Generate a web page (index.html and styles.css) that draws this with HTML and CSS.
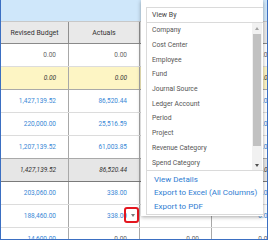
FILE: index.html
```html
<!DOCTYPE html>
<html>
<head>
<meta charset="utf-8">
<link rel="stylesheet" href="styles.css">
</head>
<body>
<div class="frame">
  <div class="band"></div>
  <div class="row head">
    <div class="c">Revised Budget</div>
    <div class="c">Actuals</div>
    <div class="c"></div>
    <div class="c"></div>
  </div>
  <div class="row">
    <div class="c n">0.00</div><div class="c n">0.00</div><div class="c n"></div><div class="c n">0.00</div>
  </div>
  <div class="row yellow">
    <div class="c n">0.00</div><div class="c n">0.00</div><div class="c n"></div><div class="c n">0.00</div>
  </div>
  <div class="row">
    <div class="c n link">1,427,139.52</div><div class="c n link">86,520.44</div><div class="c n"></div><div class="c n link">0.00</div>
  </div>
  <div class="row">
    <div class="c n link">220,000.00</div><div class="c n link">25,516.59</div><div class="c n"></div><div class="c n link">0.00</div>
  </div>
  <div class="row">
    <div class="c n link">1,207,139.52</div><div class="c n link">61,003.85</div><div class="c n"></div><div class="c n link">0.00</div>
  </div>
  <div class="row grey">
    <div class="c n">1,427,139.52</div><div class="c n">86,520.44</div><div class="c n"></div><div class="c n">0.00</div>
  </div>
  <div class="row">
    <div class="c n link">203,060.00</div><div class="c n link">338.00</div><div class="c n"></div><div class="c n link">0.00</div>
  </div>
  <div class="row">
    <div class="c n link">188,460.00</div><div class="c n link active">338.00<span class="hl"><span class="tri"></span></span></div><div class="c n"></div><div class="c n link">0.00</div>
  </div>
  <div class="row">
    <div class="c n link">14,600.00</div><div class="c n">0.00</div><div class="c n">0.00</div><div class="c n">0.00</div>
  </div>

  <div class="popup">
    <div class="box">
      <div class="viewby">View By</div>
      <div class="list">
        <ul class="items">
          <li>Company</li>
          <li>Cost Center</li>
          <li>Employee</li>
          <li>Fund</li>
          <li>Journal Source</li>
          <li>Ledger Account</li>
          <li>Period</li>
          <li>Project</li>
          <li>Revenue Category</li>
          <li>Spend Category</li>
        </ul>
        <div class="sb">
          <div class="sb-btn"><span class="up"></span></div>
          <div class="sb-track"><div class="sb-thumb"></div></div>
          <div class="sb-btn"><span class="down"></span></div>
        </div>
      </div>
      <div class="links">
        <a>View Details</a>
        <a>Export to Excel (All Columns)</a>
        <a>Export to PDF</a>
      </div>
    </div>
  </div>
</div>
</body>
</html>
```

FILE: styles.css
```css
html, body {
  margin: 0;
  padding: 0;
  background: #ffffff;
}
.frame {
  position: relative;
  width: 266px;
  height: 239px;
  border-left: 1px solid #3b6fc2;
  border-right: 1px solid #3b6fc2;
  border-bottom: 1px solid #3b6fc2;
  overflow: hidden;
  font-family: Roboto, "Liberation Sans", sans-serif;
}
.band {
  height: 21px;
  background: #cfe7fa;
}
.row {
  display: grid;
  grid-template-columns: 68px 71px 72px 72px;
  height: 22px;
  border-bottom: 1px solid #dcdcdc;
  background: #ffffff;
}
.c {
  display: flex;
  align-items: center;
  border-right: 1px solid #a8a8a8;
  font-size: 6.5px;
  color: #666;
  white-space: nowrap;
  position: relative;
}
.n {
  justify-content: flex-end;
  padding-right: 12px;
}
.head {
  height: 21px;
  border-top: 1px solid #c8c8c8;
  border-bottom: 1px solid #8a8a8a;
  background: #e9e9e9;
}
.head .c {
  justify-content: center;
  font-size: 7px;
  color: #333;
  border-right-color: #8f8f8f;
}
.yellow {
  background: #fdf5c4;
  border-bottom-color: #a9a9a9;
}
.yellow .c, .grey .c {
  font-style: italic;
  color: #333;
}
.grey {
  background: #e6e6e6;
  border-bottom-color: #7a7a7a;
}
.row:has(+ .grey) {
  border-bottom-color: #a9a9a9;
}
.link {
  color: #3a88d6;
}
.hl {
  position: absolute;
  left: 55px;
  top: 2px;
  width: 11px;
  height: 12px;
  border: 2px solid #e4161f;
  border-radius: 3px;
  display: flex;
  align-items: center;
  justify-content: center;
}
.tri {
  width: 0;
  height: 0;
  border-left: 2px solid transparent;
  border-right: 2px solid transparent;
  border-top: 3px solid #7a7a7a;
  margin-left: 3px;
}

.popup {
  position: absolute;
  left: 140px;
  top: 0;
  width: 122px;
  height: 216px;
  background: #ffffff;
  box-shadow: 0 1px 4px rgba(0, 0, 0, 0.35);
  padding-top: 7px;
  padding-left: 5px;
  box-sizing: border-box;
}
.box {
  border: 1px solid #dadada;
  border-right: none;
  height: 208px;
  box-sizing: border-box;
  display: flex;
  flex-direction: column;
}
.viewby {
  height: 14px;
  border-bottom: 1px solid #dadada;
  font-size: 7px;
  color: #444;
  padding-left: 5px;
  display: flex;
  align-items: center;
}
.list {
  height: 147px;
  border-bottom: 1px solid #dadada;
  display: flex;
}
.items {
  list-style: none;
  margin: 0;
  padding: 0;
  flex: 1;
}
.items li {
  height: 14.7px;
  display: flex;
  align-items: center;
  padding-left: 5px;
  font-size: 6.8px;
  color: #555;
}
.sb {
  width: 10px;
  margin-right: 1px;
  display: flex;
  flex-direction: column;
  background: #f1f1f1;
}
.sb-btn {
  height: 10px;
  display: flex;
  align-items: center;
  justify-content: center;
}
.sb-track {
  flex: 1;
  padding: 1px 1px 14px;
  display: flex;
}
.sb-thumb {
  flex: 1;
  background: #c1c1c1;
}
.up, .down {
  width: 0;
  height: 0;
  border-left: 2.5px solid transparent;
  border-right: 2.5px solid transparent;
}
.up {
  border-bottom: 3px solid #a3a3a3;
}
.down {
  border-top: 3px solid #505050;
}
.links {
  display: flex;
  flex-direction: column;
  padding: 2px 0 0 7px;
}
.links a {
  font-size: 8px;
  line-height: 13.3px;
  color: #2f7dd2;
  white-space: nowrap;
}
```
